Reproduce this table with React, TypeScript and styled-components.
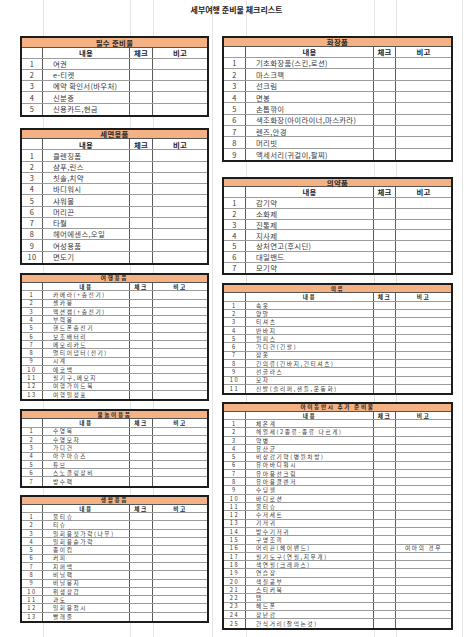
import { FC } from 'react'
import styled, { createGlobalStyle } from 'styled-components'

const GlobalStyle = createGlobalStyle`
  html, body {
    margin: 0;
    padding: 0;
    background: #fff;
  }

  body {
    font-family: "Noto Sans CJK KR", "Noto Sans", sans-serif;
    color: #333;
  }

  * {
    box-sizing: border-box;
  }
`

type Size = {
  band: number
  head: number
  row: number
  font: number
  spacing: number
}

type Item = { name: string; note?: string }

type Checklist = {
  title: string
  items: Item[]
  size: Size
  gapBefore: number
}

const LEFT_COLS = '21px 87px 23px 1fr'
const RIGHT_COLS = '22px 128px 22px 1fr'

const big = (row: number, band = 9.5): Size => ({ band, head: 11, row, font: 7.4, spacing: 0.3 })
const small: Size = { band: 8, head: 8.5, row: 8.3, font: 5.7, spacing: 1.6 }

const list = (names: string[]): Item[] => names.map((name) => ({ name }))

const leftColumn: Checklist[] = [
  {
    title: '필수 준비물',
    size: big(11.25),
    gapBefore: 0,
    items: list(['여권', 'e-티켓', '예약 확인서(바우처)', '신분증', '신용카드,현금']),
  },
  {
    title: '세면용품',
    size: big(11.25),
    gapBefore: 11,
    items: list([
      '클렌징폼',
      '샴푸,린스',
      '칫솔,치약',
      '바디워시',
      '샤워볼',
      '머리끈',
      '타월',
      '헤어에센스,오일',
      '여성용품',
      '면도기',
    ]),
  },
  {
    title: '여행용품',
    size: small,
    gapBefore: 8,
    items: list([
      '카메라(+충전기)',
      '셀카봉',
      '액션캠(+충전기)',
      '부력봉',
      '핸드폰충전기',
      '보조배터리',
      '메모리카드',
      '멀티어댑터(전기)',
      '시계',
      '에코백',
      '필기구,메모지',
      '여행가이드북',
      '여행일정표',
    ]),
  },
  {
    title: '물놀이용품',
    size: small,
    gapBefore: 8,
    items: list(['수영복', '수영모자', '가디건', '아쿠아슈즈', '튜브', '스노클링장비', '방수팩']),
  },
  {
    title: '생활용품',
    size: small,
    gapBefore: 7,
    items: list([
      '물티슈',
      '티슈',
      '일회용젓가락(나무)',
      '일회용숟가락',
      '종이컵',
      '커피',
      '지퍼백',
      '비닐팩',
      '비닐봉지',
      '위생장갑',
      '과도',
      '일회용접시',
      '빨래줄',
    ]),
  },
]

const rightColumn: Checklist[] = [
  {
    title: '화장품',
    size: big(11.35, 9),
    gapBefore: 0,
    items: list([
      '기초화장품(스킨,로션)',
      '마스크팩',
      '선크림',
      '면봉',
      '손톱깎이',
      '색조화장(아이라이너,마스카라)',
      '렌즈,안경',
      '머리빗',
      '액세서리(귀걸이,팔찌)',
    ]),
  },
  {
    title: '의약품',
    size: big(10.75, 8),
    gapBefore: 15,
    items: list(['감기약', '소화제', '진통제', '지사제', '상처연고(후시딘)', '대일밴드', '모기약']),
  },
  {
    title: '의류',
    size: small,
    gapBefore: 8,
    items: list([
      '속옷',
      '양말',
      '티셔츠',
      '반바지',
      '원피스',
      '가디건(긴팔)',
      '잠옷',
      '긴의류(긴바지,긴티셔츠)',
      '선글라스',
      '모자',
      '신발(슬리퍼,샌들,운동화)',
    ]),
  },
  {
    title: '아이동반시 추가 준비물',
    size: small,
    gapBefore: 6.5,
    items: [
      ...list([
        '체온계',
        '해열제(2종류-종류 다르게)',
        '약병',
        '유산균',
        '비상감기약(병원처방)',
        '유아바디워시',
        '유아용선크림',
        '유아용클렌저',
        '수딩젤',
        '바디로션',
        '물티슈',
        '수저세트',
        '기저귀',
        '방수기저귀',
        '구명조끼',
      ]),
      { name: '머리끈(헤어밴드)', note: '여아의 경우' },
      ...list([
        '필기도구(연필,지우개)',
        '색연필(크레파스)',
        '연습장',
        '색칠공부',
        '스티커북',
        '탭',
        '헤드폰',
        '장난감',
        '간식거리(잘먹는것)',
      ]),
    ],
  },
]

// faint spreadsheet gridlines behind the tables
const gridLine = (x: number) => `linear-gradient(#e4e4e4, #e4e4e4) ${x}px 0 / 1px 100% no-repeat`

const Sheet = styled.main`
  width: 474px;
  min-height: 637px;
  padding: 0 21px 0 20px;
  background: ${[43, 130, 153, 212, 246, 374, 396, 462].map(gridLine).join(', ')};
`

const Title = styled.h1`
  height: 36px;
  margin: 0;
  padding-top: 4px;
  font-size: 8px;
  line-height: 12px;
  font-weight: 700;
  color: #222;
  text-align: center;
`

const Columns = styled.div`
  display: flex;
  gap: 13px;
  align-items: flex-start;
`

const Column = styled.div<{ $width: number }>`
  display: flex;
  flex-direction: column;
  width: ${(p) => p.$width}px;
  flex: none;
`

const Table = styled.section<{ $gap: number; $font: number; $spacing: number }>`
  margin-top: ${(p) => p.$gap}px;
  border: 2px solid #1c1c1c;
  background: #fff;
  font-size: ${(p) => p.$font}px;
  letter-spacing: ${(p) => p.$spacing}px;
`

const Band = styled.div<{ $height: number }>`
  height: ${(p) => p.$height}px;
  background: #f4b183;
  border-bottom: 1px solid #555;
  display: flex;
  align-items: center;
  justify-content: center;
  font-weight: 700;
  color: #2a2a2a;
  line-height: 1;
`

const Row = styled.div<{ $cols: string; $height: number }>`
  display: grid;
  grid-template-columns: ${(p) => p.$cols};
  height: ${(p) => p.$height}px;
  border-bottom: 1px solid #9c9c9c;

  &:last-child {
    border-bottom: none;
  }
`

const Cell = styled.div<{ $align?: 'left' | 'center'; $bold?: boolean }>`
  display: flex;
  align-items: center;
  justify-content: ${(p) => (p.$align === 'left' ? 'flex-start' : 'center')};
  padding-left: ${(p) => (p.$align === 'left' ? '10px' : '0')};
  border-right: 1px solid #5a5a5a;
  font-weight: ${(p) => (p.$bold ? 700 : 400)};
  color: ${(p) => (p.$bold ? '#222' : '#3a3a3a')};
  white-space: nowrap;
  line-height: 1;

  &:last-child {
    border-right: none;
  }
`

const ChecklistTable: FC<{ list: Checklist; cols: string }> = ({ list, cols }) => {
  const { size } = list
  return (
    <Table $gap={list.gapBefore} $font={size.font} $spacing={size.spacing}>
      <Band $height={size.band}>{list.title}</Band>
      <Row $cols={cols} $height={size.head}>
        <Cell />
        <Cell $bold>내용</Cell>
        <Cell $bold>체크</Cell>
        <Cell $bold>비고</Cell>
      </Row>
      {list.items.map((item, i) => (
        <Row key={item.name} $cols={cols} $height={size.row}>
          <Cell>{i + 1}</Cell>
          <Cell $align="left">{item.name}</Cell>
          <Cell />
          <Cell>{item.note}</Cell>
        </Row>
      ))}
    </Table>
  )
}

export default function App() {
  return (
    <>
      <GlobalStyle />
      <Sheet>
        <Title>세부여행 준비물 체크리스트</Title>
        <Columns>
          <Column $width={189}>
            {leftColumn.map((l) => (
              <ChecklistTable key={l.title} list={l} cols={LEFT_COLS} />
            ))}
          </Column>
          <Column $width={231}>
            {rightColumn.map((l) => (
              <ChecklistTable key={l.title} list={l} cols={RIGHT_COLS} />
            ))}
          </Column>
        </Columns>
      </Sheet>
    </>
  )
}
